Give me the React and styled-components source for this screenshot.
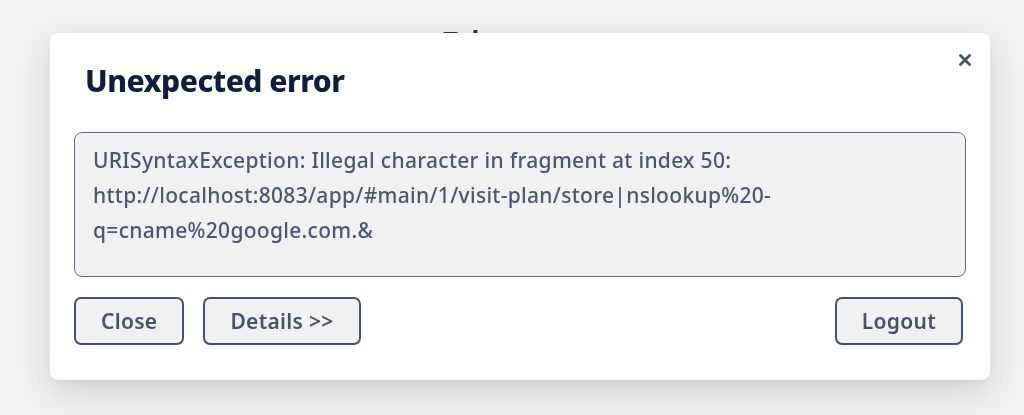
import React from 'react'
import styled, { createGlobalStyle } from 'styled-components'

const GlobalStyle = createGlobalStyle`
    html, body {
        margin: 0;
        padding: 0;
        background: #f2f2f2;
        font-family: "Noto Sans", "Open Sans", sans-serif;
    }
`

const errorText = 'URISyntaxException: Illegal character in fragment at index 50: http://localhost:8083/app/#main/1/visit-plan/store|nslookup%20-q=cname%20google.com.&'

export default function App() {
    return (
        <>
            <GlobalStyle />
            <Page>
                <PageTitle>Tabs</PageTitle>
            </Page>
            <Overlay>
                <Dialog role="dialog" aria-labelledby="err-title">
                    <CloseX aria-label="close">
                        <svg width="12" height="12" viewBox="0 0 12 12">
                            <path d="M1.5 1.5 L10.5 10.5 M10.5 1.5 L1.5 10.5" stroke="currentColor" strokeWidth="2.8" strokeLinecap="round" />
                        </svg>
                    </CloseX>
                    <Title id="err-title">Unexpected error</Title>
                    <Message>{errorText}</Message>
                    <Actions>
                        <Left>
                            <Button>Close</Button>
                            <Button>Details &gt;&gt;</Button>
                        </Left>
                        <Button>Logout</Button>
                    </Actions>
                </Dialog>
            </Overlay>
        </>
    )
}

const Page = styled.div`
    height: 415px;
    display: flex;
    padding: 26px 0 0 443px;
    box-sizing: border-box;
`

const PageTitle = styled.h1`
    margin: 0;
    font-size: 26px;
    font-weight: 700;
    color: #333;
    line-height: 1.2;
`

const Overlay = styled.div`
    position: fixed;
    inset: 0;
    padding: 33px 34px 0 50px;
`

const Dialog = styled.div`
    position: relative;
    width: 940px;
    height: 347px;
    box-sizing: border-box;
    background: #fff;
    border-radius: 8px;
    box-shadow: 0 12px 32px rgba(40, 50, 70, 0.16), 0 2px 6px rgba(40, 50, 70, 0.06);
    padding: 24px 24px 35px;
    display: flex;
    flex-direction: column;
`

const CloseX = styled.button`
    position: absolute;
    top: 21px;
    right: 19px;
    border: 0;
    background: none;
    padding: 0;
    color: #45526e;
    display: flex;
    cursor: pointer;
`

const Title = styled.h2`
    margin: 2px 0 0 11px;
    font-size: 30px;
    font-weight: 800;
    letter-spacing: -0.5px;
    color: #0f1d3f;
    line-height: 44px;
`

const Message = styled.div`
    margin-top: 29px;
    height: 145px;
    box-sizing: border-box;
    border: 1px solid #5c6a8c;
    border-radius: 8px;
    background: #f1f1f1;
    padding: 10px 40px 0 18px;
    font-size: 21px;
    font-weight: 500;
    letter-spacing: 0.3px;
    line-height: 35px;
    color: #4b5672;
    overflow-wrap: anywhere;
`

const Actions = styled.div`
    margin-top: 20px;
    display: flex;
    justify-content: space-between;
    padding-right: 3px;
`

const Left = styled.div`
    display: flex;
    gap: 19px;
`

const Button = styled.button`
    height: 48px;
    padding: 0 25px;
    border: 2.5px solid #45526e;
    border-radius: 7px;
    background: #f1f1f1;
    font-family: inherit;
    font-size: 21px;
    font-weight: 600;
    letter-spacing: 0.3px;
    color: #45526e;
    cursor: pointer;
`
